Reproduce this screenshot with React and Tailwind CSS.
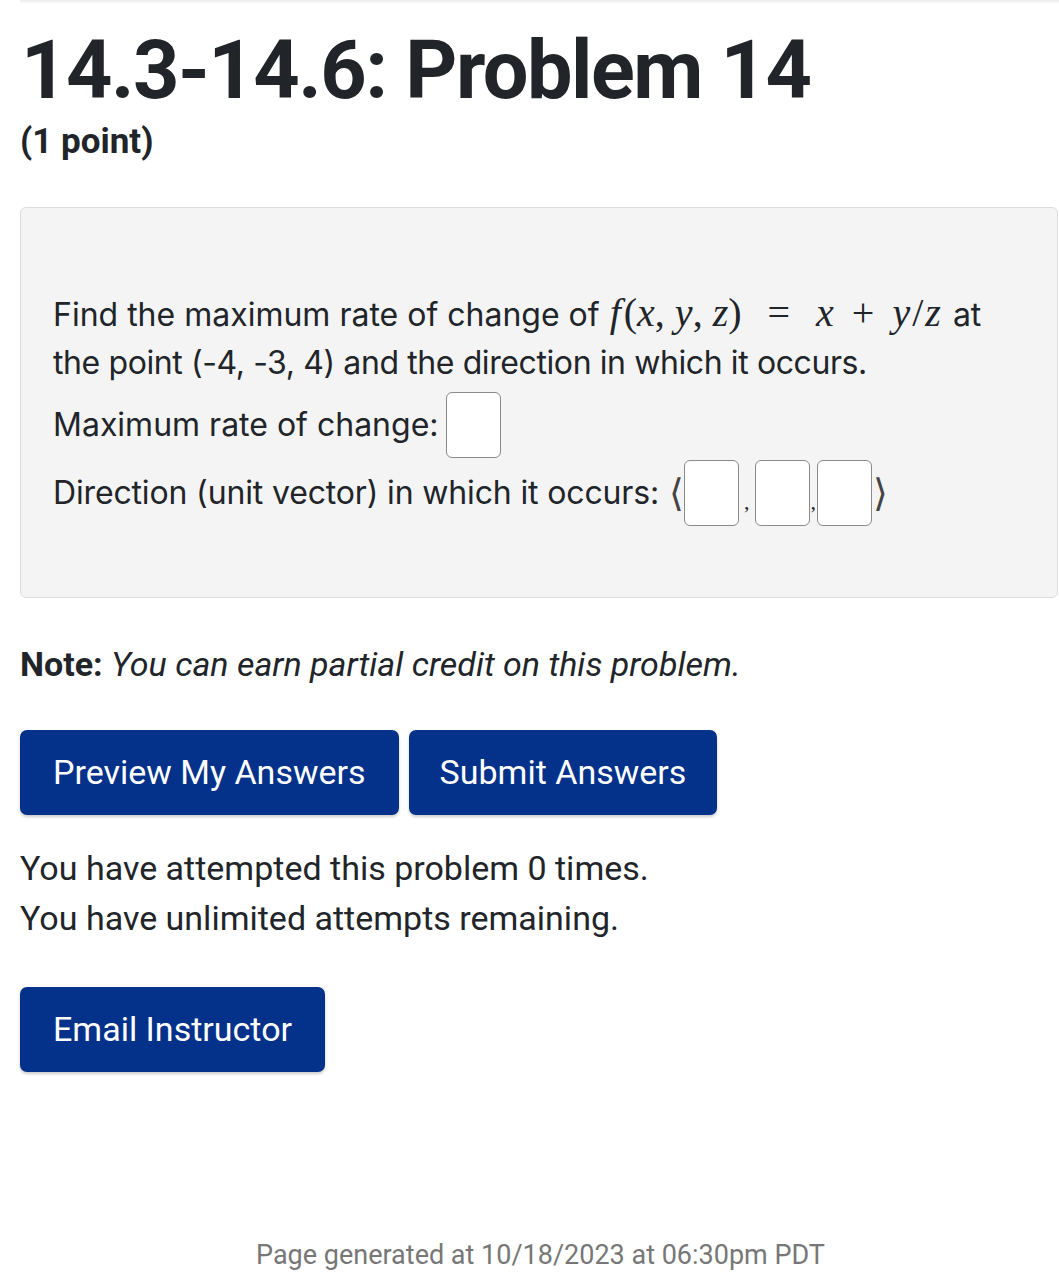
import React from 'react'

const roboto = { fontFamily: 'Roboto, "Liberation Sans", sans-serif' }

function AnswerBox() {
    return <span className="inline-block w-[55px] h-[66px] bg-white border border-[#8a8a8a] rounded-[6px] align-middle"></span>
}

function MathExpr() {
    // f(x, y, z) = x + y/z
    return (
        <span className="text-[40px] leading-[40px] whitespace-nowrap ml-[10px] mr-[12px]" style={{ fontFamily: '"Liberation Serif", "DejaVu Serif", serif' }}>
            <i>f</i>
            <span className="ml-[3px]">(</span><i>x</i><span className="mr-[10px]">,</span><i>y</i><span className="mr-[10px]">,</span><i>z</i><span>)</span>
            <span className="mx-[26px]">=</span>
            <i>x</i>
            <span className="mx-[18px]">+</span>
            <i>y</i><span className="mx-[2px]">/</span><i>z</i>
        </span>
    )
}

export default function App() {
    return (
        <div className="min-h-[1286px] bg-white text-[#212529] overflow-hidden" style={roboto}>
            <div className="h-[4px] ml-[20px] bg-gradient-to-b from-[#ececec] to-white rounded-bl-full"></div>
            <div className="px-[20px]">
                <h1 className="mt-[17px] text-[81px] leading-[100px] font-bold tracking-[-1.5px] ml-[1px]">14.3-14.6: Problem 14</h1>
                <div className="text-[35px] leading-[40px] font-bold mt-px">(1 point)</div>

                {/* problem box */}
                <div className="mt-[45px] bg-[#f4f4f4] border border-[#dcdcdc] rounded-[6px] pl-[32px] pr-[20px] pt-[83px] pb-[71px] -mr-[19px]"
                    style={{ fontFamily: 'Inter, "Noto Sans", sans-serif' }}>
                    <p className="text-[32px] leading-[48px]">
                        Find the maximum rate of change of<MathExpr />at<br />
                        <span className="tracking-[-0.4px]">the point (-4, -3, 4) and the direction in which it occurs.</span>
                    </p>
                    <div className="mt-[5px] flex items-center text-[32px] h-[66px]">
                        <span>Maximum rate of change:</span>
                        <span className="ml-[7px] flex"><AnswerBox /></span>
                    </div>
                    <div className="mt-[2px] flex items-center text-[32px] h-[66px]">
                        <span className="tracking-[-0.15px]">Direction (unit vector) in which it occurs:</span>
                        <span className="ml-[10px] flex items-center" style={{ fontFamily: '"Liberation Serif", serif' }}>
                            <span className="text-[38px] text-[#444]">⟨</span>
                            <AnswerBox />
                            <span className="text-[22px] self-end mb-[8px] mx-[5px]">,</span>
                            <AnswerBox />
                            <span className="text-[22px] self-end mb-[8px] mx-[1px]">,</span>
                            <AnswerBox />
                            <span className="text-[38px] text-[#444] ml-[1px]">⟩</span>
                        </span>
                    </div>
                </div>

                <p className="mt-[43px] text-[34px] leading-[46px]">
                    <b>Note:</b> <i>You can earn partial credit on this problem.</i>
                </p>

                <div className="mt-[43px] flex gap-[10px]">
                    <button className="h-[85px] px-[33px] bg-[#04318a] text-white text-[34px] rounded-[7px] shadow-[0_2px_3px_rgba(0,0,0,0.2)]">Preview My Answers</button>
                    <button className="h-[85px] px-[31px] bg-[#04318a] text-white text-[34px] rounded-[7px] shadow-[0_2px_3px_rgba(0,0,0,0.2)]">Submit Answers</button>
                </div>

                <div className="mt-[28px] text-[34px] leading-[50px]">
                    <p>You have attempted this problem 0 times.</p>
                    <p>You have unlimited attempts remaining.</p>
                </div>

                <button className="mt-[44px] h-[85px] px-[33px] bg-[#04318a] text-white text-[34px] rounded-[7px] shadow-[0_2px_3px_rgba(0,0,0,0.2)]">Email Instructor</button>

                <div className="mt-[163px] text-center text-[27px] leading-[40px] text-[#777] pl-[22px]">Page generated at 10/18/2023 at 06:30pm PDT</div>
            </div>
        </div>
    )
}
